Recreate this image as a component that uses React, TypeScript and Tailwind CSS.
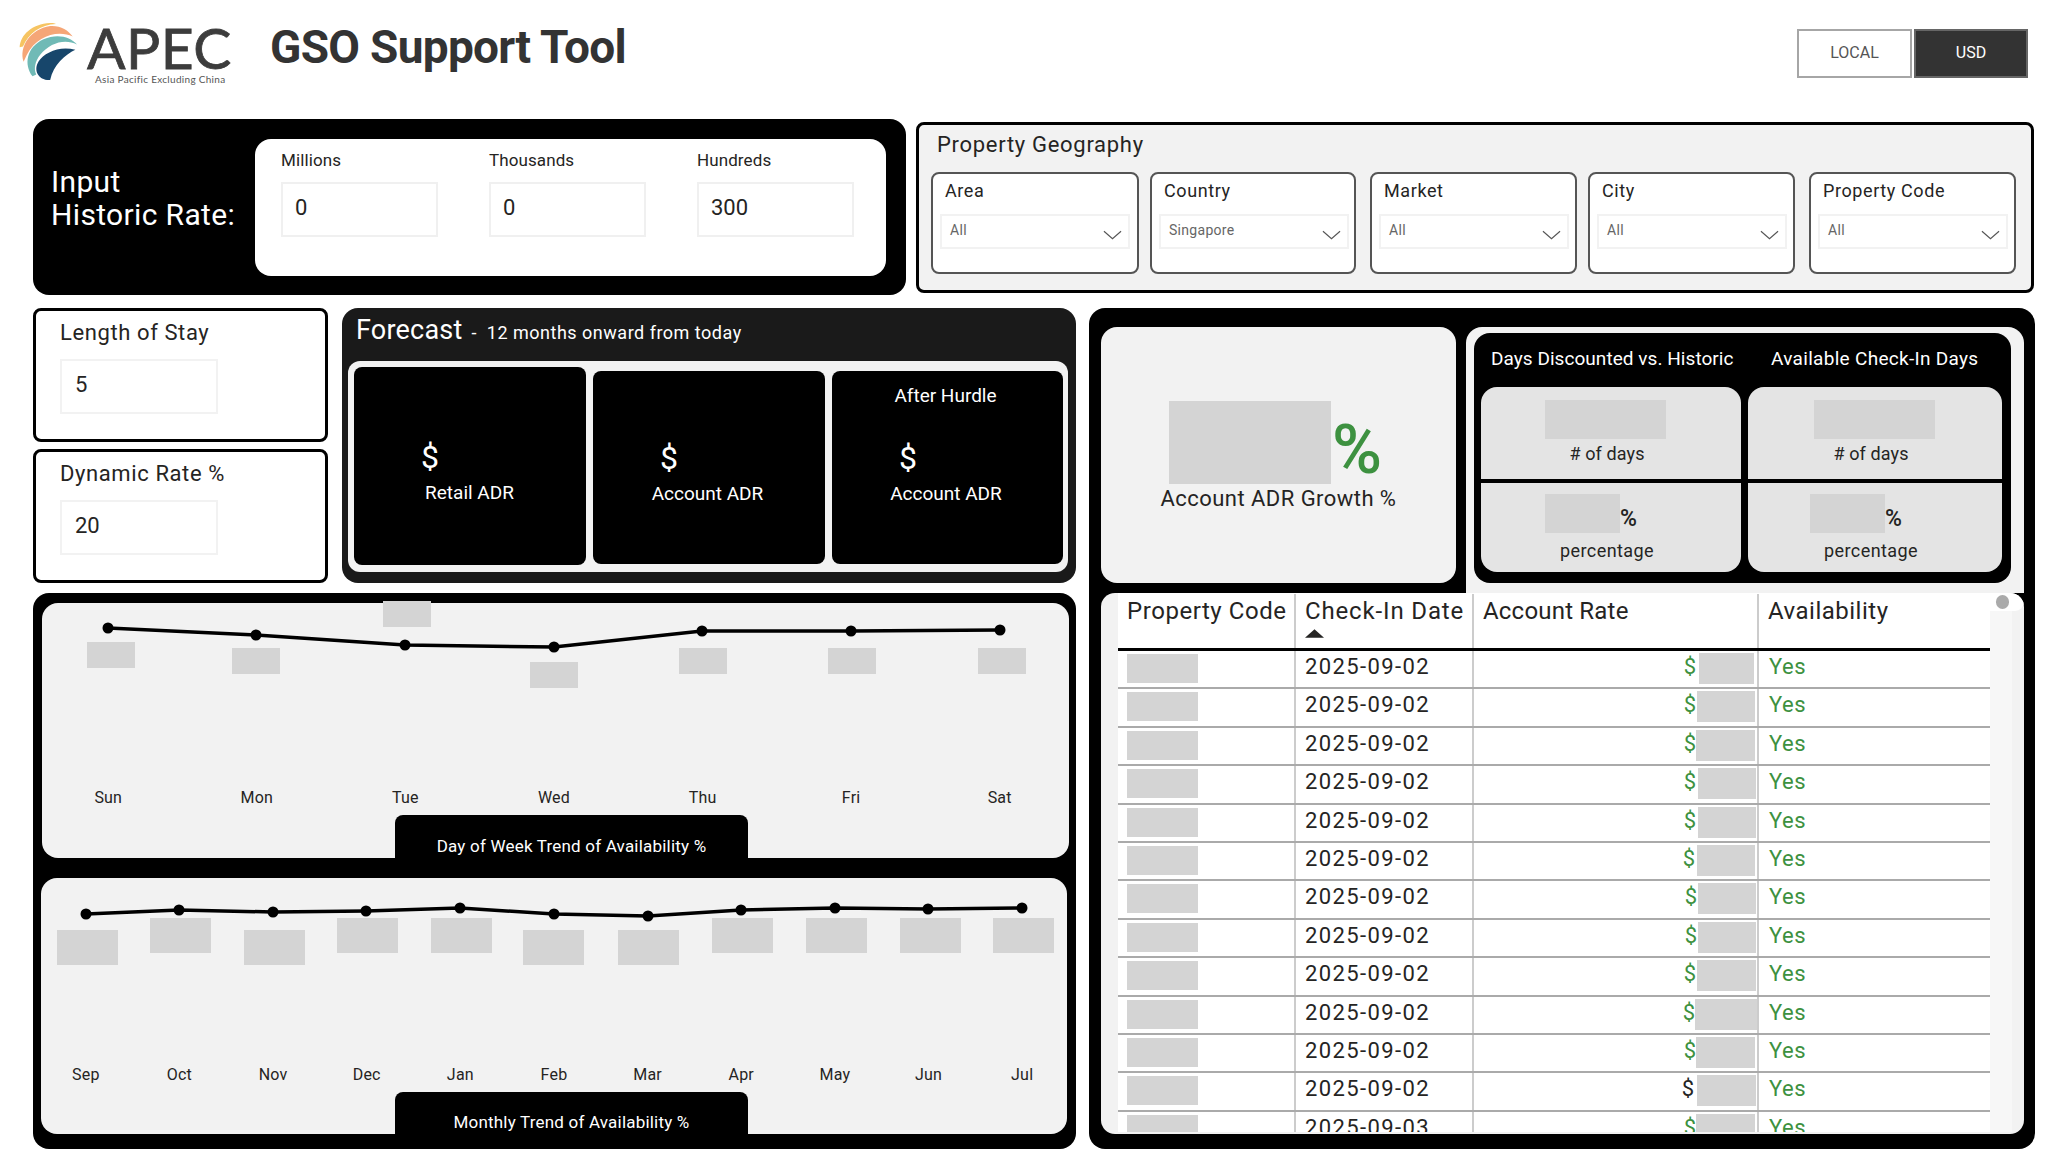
const ink = 'text-[#252423]';

const geoCards = [
  { label: 'Area', value: 'All', box: 'w-[208px] ml-0' },
  { label: 'Country', value: 'Singapore', box: 'w-[206px] ml-[11px]' },
  { label: 'Market', value: 'All', box: 'w-[207px] ml-[14px]' },
  { label: 'City', value: 'All', box: 'w-[207px] ml-[11px]' },
  { label: 'Property Code', value: 'All', box: 'w-[207px] ml-[14px]' },
];

const weekPoints = [
  [108, 628], [256, 635], [405, 645], [554, 647], [702, 631], [851, 631], [1000, 630],
];
const weekBlocks = [
  [87, 642], [232, 648], [383, 601], [530, 662], [679, 648], [828, 648], [978, 648],
];
const weekLabels = ['Sun', 'Mon', 'Tue', 'Wed', 'Thu', 'Fri', 'Sat'];

const monthPoints = [
  [86, 914], [179, 910], [273, 912], [366, 911], [460, 908], [554, 914], [648, 916], [741, 910], [835, 908], [928, 909], [1022, 908],
];
const monthBlocks = [
  [57, 930], [150, 918], [244, 930], [337, 918], [431, 918], [523, 930], [618, 930], [712, 918], [806, 918], [900, 918], [993, 918],
];
const monthLabels = ['Sep', 'Oct', 'Nov', 'Dec', 'Jan', 'Feb', 'Mar', 'Apr', 'May', 'Jun', 'Jul'];

// width of the hidden amount, gap to the $, gap to the column line
const rows = [
  { w: 55, gap: 3, mr: 3, date: '2025-09-02', green: true },
  { w: 58, gap: 1, mr: 2, date: '2025-09-02', green: true },
  { w: 59, gap: 0, mr: 2, date: '2025-09-02', green: true },
  { w: 58, gap: 2, mr: 1, date: '2025-09-02', green: true },
  { w: 58, gap: 2, mr: 1, date: '2025-09-02', green: true },
  { w: 58, gap: 2, mr: 2, date: '2025-09-02', green: true },
  { w: 58, gap: 1, mr: 1, date: '2025-09-02', green: true },
  { w: 58, gap: 1, mr: 1, date: '2025-09-02', green: true },
  { w: 59, gap: 1, mr: 1, date: '2025-09-02', green: true },
  { w: 62, gap: 0, mr: 0, date: '2025-09-02', green: true },
  { w: 59, gap: 0, mr: 2, date: '2025-09-02', green: true },
  { w: 59, gap: 3, mr: 1, date: '2025-09-02', green: false },
  { w: 59, gap: 0, mr: 2, date: '2025-09-03', green: true },
];

function Logo() {
  return (
    <svg viewBox="50 60 190 190" className="w-[63px] h-[63px] mt-[20px] ml-[17px]">
      <path d="M58,142 C60,105 95,72 150,69 C160,69 165,71 168,72 C120,74 85,100 68,140 Z" fill="#f6c462" />
      <path d="M70,186 C55,140 90,88 150,78 C180,76 205,90 218,110 C175,90 110,105 79,166 Z" fill="#f5a677" />
      <path d="M97,230 C70,195 78,142 130,118 C170,100 212,110 231,134 C195,116 150,128 120,165 C104,186 100,208 108,224 Z" fill="#70bab6" />
      <path d="M150,241 C115,243 98,212 115,185 C132,158 180,136 226,150 C195,165 160,195 150,241 Z" fill="#17466b" />
    </svg>
  );
}

function Header() {
  return (
    <div className="flex h-[119px]">
      <Logo />
      <div className="ml-[7px] w-[183px] pt-[21px]">
        <div className="[font-family:Lato,sans-serif] text-[57px] leading-[53px] tracking-[0.5px] text-[#3c3c3c] [-webkit-text-stroke:0.8px_#3c3c3c]">APEC</div>
        <div className="[font-family:Lato,sans-serif] text-[10px] leading-[10px] text-[#555] ml-[8px] tracking-[0.3px]">Asia Pacific Excluding China</div>
      </div>
      <div className="pt-[20px] text-[46px] leading-[54px] font-bold text-[#333] tracking-[-0.7px]">GSO Support Tool</div>
      <div className="ml-auto mr-[44px] mt-[29px] flex gap-[2px] h-[49px]">
        <div className="w-[115px] border-2 border-[#a6a6a6] bg-white flex items-center justify-center pb-[1px] text-[16px] text-[#555]">LOCAL</div>
        <div className="w-[114px] border-2 border-[#666] bg-[#333] flex items-center justify-center pb-[1px] text-[16px] text-white">USD</div>
      </div>
    </div>
  );
}

function InputBox({ value }: { value: string }) {
  return (
    <div className={`w-[157px] h-[55px] border-2 border-[#f0f0f0] bg-white pl-[12px] pt-[10px] text-[22px] leading-[28px] ${ink}`}>
      {value}
    </div>
  );
}

function HistoricRate() {
  const fields = [
    { label: 'Millions', value: '0' },
    { label: 'Thousands', value: '0' },
    { label: 'Hundreds', value: '300' },
  ];
  return (
    <div className="w-[873px] h-[176px] bg-black rounded-2xl flex">
      <div className="w-[222px] pl-[18px] pt-[46px] text-white text-[30px] leading-[33px] tracking-[0.35px]">
        Input
        <br />
        Historic Rate:
      </div>
      <div className="mt-[20px] w-[631px] h-[137px] bg-white rounded-2xl pl-[26px] pt-[11px] flex gap-[51px]">
        {fields.map((f) => (
          <div key={f.label}>
            <div className={`text-[17px] leading-[20px] tracking-[0.1px] ${ink} mb-[12px]`}>{f.label}</div>
            <InputBox value={f.value} />
          </div>
        ))}
      </div>
    </div>
  );
}

function Geography() {
  return (
    <div className="ml-[10px] mt-[3px] w-[1118px] h-[171px] border-[3px] border-black rounded-lg bg-[#f2f2f2]">
      <div className={`pl-[18px] pt-[6px] text-[22px] leading-[28px] tracking-[0.7px] ${ink}`}>Property Geography</div>
      <div className="flex mt-[13px] pl-[12px]">
        {geoCards.map((c) => (
          <div key={c.label} className={`${c.box} h-[102px] bg-white border-2 border-[#555] rounded-lg pt-[5px]`}>
            <div className={`pl-[12px] text-[18px] leading-[24px] tracking-[0.6px] ${ink}`}>{c.label}</div>
            <div className="ml-[7px] mt-[11px] w-[190px] h-[35px] border-2 border-[#f2f2f2] flex justify-between pl-[8px] pr-[6px]">
              <span className="text-[14px] leading-[28px] tracking-[0.3px] text-[#666]">{c.value}</span>
              <svg viewBox="0 0 20 10" className="w-[19px] h-[10px] mt-[14px]" fill="none" stroke="#555" strokeWidth="1.2">
                <path d="M1,1 L10,9 L19,1" />
              </svg>
            </div>
          </div>
        ))}
      </div>
    </div>
  );
}

function SmallCard({ label, value }: { label: string; value: string }) {
  return (
    <div className="w-[295px] h-[134px] border-[3px] border-black rounded-lg bg-white pl-[24px] pt-[8px]">
      <div className={`text-[22px] leading-[28px] tracking-[0.6px] ${ink} mb-[12px]`}>{label}</div>
      <div className={`w-[158px] h-[55px] border-2 border-[#f2f2f2] pl-[13px] pt-[10px] text-[22px] leading-[28px] ${ink}`}>{value}</div>
    </div>
  );
}

function Forecast() {
  return (
    <div className="ml-[14px] w-[734px] h-[275px] bg-[#1a1a1a] rounded-2xl">
      <div className="h-[53px] pl-[14px] pt-[6px] text-white flex items-baseline">
        <span className="text-[27px] leading-[32px] tracking-[0.2px]">Forecast</span>
        <span className="text-[18px] ml-[9px] tracking-[0.5px]">- &nbsp;12 months onward from today</span>
      </div>
      <div className="ml-[6px] w-[720px] h-[211px] bg-[#f2f2f2] rounded-xl flex items-start pl-[6px] gap-[7px] text-white">
        <div className="w-[232px] h-[198px] mt-[6px] bg-black rounded-lg pt-[70px]">
          <div className="pl-[67px] text-[32px] leading-[40px]">$</div>
          <div className="mt-[4px] text-center text-[19px] leading-[24px] pr-[1px]">Retail ADR</div>
        </div>
        <div className="w-[232px] h-[193px] mt-[10px] bg-black rounded-lg pt-[67px]">
          <div className="pl-[67px] text-[32px] leading-[40px]">$</div>
          <div className="mt-[4px] text-center text-[19px] leading-[24px] pr-[3px]">Account ADR</div>
        </div>
        <div className="w-[231px] h-[193px] mt-[10px] bg-black rounded-lg pt-[13px]">
          <div className="text-center text-[19px] leading-[24px] pr-[4px]">After Hurdle</div>
          <div className="pl-[67px] mt-[30px] text-[32px] leading-[40px]">$</div>
          <div className="mt-[4px] text-center text-[19px] leading-[24px] pr-[3px]">Account ADR</div>
        </div>
      </div>
    </div>
  );
}

function TrendChart({
  viewBox, height, points, blocks, bw, bh,
}: {
  viewBox: string; height: number; points: number[][]; blocks: number[][]; bw: number; bh: number;
}) {
  return (
    <svg viewBox={viewBox} className="block w-full overflow-visible" style={{ height }}>
      {blocks.map(([x, y]) => (
        <rect key={x} x={x} y={y} width={bw} height={bh} fill="#d4d4d4" />
      ))}
      <polyline points={points.map((p) => p.join(',')).join(' ')} fill="none" stroke="#000" strokeWidth="3.5" />
      {points.map(([x, y]) => (
        <circle key={x} cx={x} cy={y} r="5.5" fill="#000" />
      ))}
    </svg>
  );
}

function Charts() {
  return (
    <div className="mt-[10px] w-[1043px] h-[556px] bg-black rounded-2xl pt-[10px]">
      <div className="ml-[9px] w-[1027px] h-[255px] bg-[#f2f2f2] rounded-2xl">
        <TrendChart viewBox="42 603 1027 185" height={185} points={weekPoints} blocks={weekBlocks} bw={48} bh={26} />
        <div className="ml-[-8px] w-[1040px] grid grid-cols-7 text-center text-[16px] leading-[20px] tracking-[0.2px] text-[#252423]">
          {weekLabels.map((l) => <div key={l}>{l}</div>)}
        </div>
        <div className="ml-[353px] mt-[7px] w-[353px] h-[43px] bg-black rounded-t-lg text-white text-center text-[17px] leading-[24px] tracking-[0.2px] pt-[19px]">
          Day of Week Trend of Availability %
        </div>
      </div>
      <div className="ml-[8px] mt-[20px] w-[1026px] h-[256px] bg-[#f2f2f2] rounded-2xl">
        <TrendChart viewBox="41 878 1026 187" height={187} points={monthPoints} blocks={monthBlocks} bw={61} bh={35} />
        <div className="ml-[-2px] w-[1030px] grid grid-cols-11 text-center text-[16px] leading-[20px] tracking-[0.2px] text-[#252423]">
          {monthLabels.map((l) => <div key={l}>{l}</div>)}
        </div>
        <div className="ml-[354px] mt-[7px] w-[353px] h-[42px] bg-black rounded-t-lg text-white text-center text-[17px] leading-[24px] tracking-[0.2px] pt-[18px]">
          Monthly Trend of Availability %
        </div>
      </div>
    </div>
  );
}

function DayTile({ wide }: { wide: boolean }) {
  const textBox = wide ? 'w-[252px]' : 'w-[246px]';
  return (
    <div className={`${wide ? 'w-[260px]' : 'w-[254px]'} h-[185px] rounded-2xl overflow-hidden flex flex-col bg-[#e4e4e4]`}>
      <div className="h-[92px] pt-[13px]">
        <div className={`${wide ? 'ml-[64px]' : 'ml-[66px]'} w-[121px] h-[39px] bg-[#d4d4d4]`} />
        <div className={`${textBox} text-center text-[18px] leading-[24px] tracking-[0.1px] text-[#252423] mt-[3px]`}># of days</div>
      </div>
      <div className="h-[4px] bg-black" />
      <div className="pt-[11px]">
        <div className={`${wide ? 'ml-[64px]' : 'ml-[62px]'} flex items-center`}>
          <div className="w-[75px] h-[39px] bg-[#d4d4d4]" />
          <span className="text-[23px] font-medium leading-[24px] mt-[10px] text-[#252423]">%</span>
        </div>
        <div className={`${textBox} text-center text-[18px] leading-[24px] tracking-[0.4px] text-[#252423] mt-[6px]`}>percentage</div>
      </div>
    </div>
  );
}

function TopStats() {
  return (
    <div className="flex items-start pl-[12px] pt-[19px]">
      <div className="w-[355px] h-[256px] bg-[#f2f2f2] rounded-2xl pt-[74px]">
        <div className="flex items-end ml-[68px]">
          <div className="w-[162px] h-[83px] bg-[#d4d4d4]" />
          <span className="ml-[1px] text-[68px] font-medium leading-[70px] mb-[-1px] text-[#3d9140]">%</span>
        </div>
        <div className={`text-center text-[22px] leading-[28px] mt-[1px] tracking-[0.45px] ${ink}`}>Account ADR Growth %</div>
      </div>
      <div className="ml-[10px] w-[558px] h-[266px] bg-[#f2f2f2] rounded-t-2xl pl-[8px] pt-[6px]">
        <div className="w-[537px] h-[250px] bg-black rounded-2xl">
          <div className="flex h-[54px] pl-[17px] pt-[13px] text-white text-[19px] leading-[26px] tracking-[0.05px]">
            <span className="w-[280px] whitespace-nowrap">Days Discounted vs. Historic</span>
            <span className="whitespace-nowrap tracking-[0.3px]">Available Check-In Days</span>
          </div>
          <div className="flex pl-[7px] gap-[7px]">
            <DayTile wide />
            <DayTile wide={false} />
          </div>
        </div>
      </div>
    </div>
  );
}

function RateTable() {
  const cols = 'grid grid-cols-[178px_178px_285px_229px]';
  const cell = 'border-r-2 border-[#ccc]';
  return (
    <div className="ml-[12px] w-[923px] h-[541px] bg-[#f2f2f2] rounded-[14px] overflow-hidden flex">
      <div className="ml-[17px] w-[872px] h-[539px] bg-white overflow-hidden">
        <div className={`${cols} h-[58px] border-b-[3px] border-black text-[24px] leading-[34px] pt-[1px] ${ink}`}>
          <div className={`${cell} pl-[9px] tracking-[0.55px]`}>Property Code</div>
          <div className={`${cell} pl-[9px] tracking-[0.85px]`}>
            Check-In Date
            <svg viewBox="0 0 20 9" className="w-[19px] h-[9px] mt-[1px]" fill="#252423">
              <path d="M0,9 L10,0 L20,9 Z" />
            </svg>
          </div>
          <div className={`${cell} pl-[9px] tracking-[0.2px]`}>Account Rate</div>
          <div className="pl-[9px] tracking-[0.5px]">Availability</div>
        </div>
        {rows.map((r, i) => (
          <div key={i} className={`${cols} h-[38.4px] border-b-2 border-[#aaa] text-[22px] leading-[26px]`}>
            <div className={`${cell} pl-[9px] pt-[3px]`}>
              <div className="w-[71px] h-[29px] bg-[#d4d4d4]" />
            </div>
            <div className={`${cell} pl-[9px] pt-[3px] tracking-[1.4px] ${ink}`}>{r.date}</div>
            <div className={`${cell} flex justify-end pt-[2px] ${r.green ? 'text-[#3d9140]' : 'text-[#252423]'}`}>
              <span className="mt-[1px]">$</span>
              <div className="h-[31px] bg-[#d4d4d4]" style={{ width: r.w, marginLeft: r.gap, marginRight: r.mr }} />
            </div>
            <div className="pl-[10px] pt-[3px] text-[#3d9140] tracking-[0.5px]">Yes</div>
          </div>
        ))}
      </div>
      <div className="w-[34px]">
        <div className="h-[18px] bg-white rounded-r-full pl-[6px] pt-[2px]">
          <div className="w-[13px] h-[14px] rounded-full bg-[#aaa]" />
        </div>
        <div className="w-[22px] h-[521px] bg-[#f7f7f7]" />
      </div>
    </div>
  );
}

export default function App() {
  return (
    <div className="w-[2072px] h-[1172px] bg-white overflow-hidden [font-family:Roboto,sans-serif]">
      <Header />
      <div className="flex items-start pl-[33px]">
        <HistoricRate />
        <Geography />
      </div>
      <div className="flex items-start mt-[13px] pl-[33px]">
        <div className="w-[1043px]">
          <div className="flex">
            <div className="flex flex-col gap-[7px]">
              <SmallCard label="Length of Stay" value="5" />
              <SmallCard label="Dynamic Rate %" value="20" />
            </div>
            <Forecast />
          </div>
          <Charts />
        </div>
        <div className="ml-[13px] w-[946px] h-[841px] bg-black rounded-2xl">
          <TopStats />
          <RateTable />
        </div>
      </div>
    </div>
  );
}
